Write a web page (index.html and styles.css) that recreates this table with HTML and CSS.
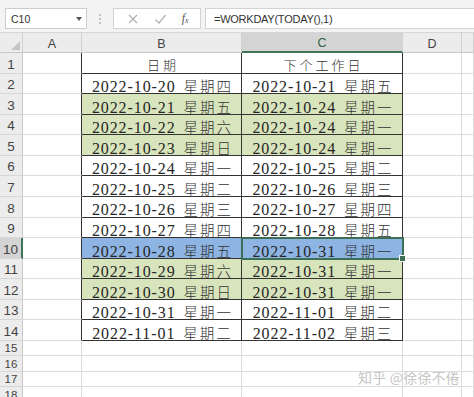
FILE: index.html
```html
<!DOCTYPE html>
<html lang="zh">
<head>
<meta charset="utf-8">
<title>WORKDAY</title>
<link rel="stylesheet" href="styles.css">
</head>
<body>
<div class="app">
  <div class="toolbar">
    <div class="namebox"><span>C10</span><svg class="caret" width="6" height="4" viewBox="0 0 6 4"><path d="M0 0H6L3 4Z" fill="#555"/></svg></div>
    <div class="dots"><i></i><i></i><i></i></div>
    <div class="fxbox">
      <svg width="12" height="12" viewBox="0 0 12 12"><path d="M2 2L10 10M10 2L2 10" stroke="#b0b0b0" stroke-width="1.2" fill="none"/></svg>
      <svg width="13" height="12" viewBox="0 0 13 12"><path d="M1.5 6.5L5 10L11.5 2" stroke="#b0b0b0" stroke-width="1.2" fill="none"/></svg>
      <span class="fx">f<sub>x</sub></span>
    </div>
    <div class="formula">=WORKDAY(TODAY(),1)</div>
  </div>

  <div class="sheet">
    <div class="corner"><svg width="9" height="9" viewBox="0 0 9 9"><path d="M9 0V9H0Z" fill="#c4c4c4"/></svg></div>
    <div class="ch">A</div><div class="ch">B</div><div class="ch selc">C</div><div class="ch">D</div><div class="ch"></div>

    <div class="rh">1</div><div class="c edge"></div><div class="c b hd">日期</div><div class="c b hd">下个工作日</div><div class="c"></div><div class="c"></div>
    <div class="rh">2</div><div class="c edge"></div><div class="c b"><span class="d">2022-10-20</span> <span class="w">星期四</span></div><div class="c b"><span class="d">2022-10-21</span> <span class="w">星期五</span></div><div class="c"></div><div class="c"></div>
    <div class="rh">3</div><div class="c edge"></div><div class="c b g"><span class="d">2022-10-21</span> <span class="w">星期五</span></div><div class="c b g"><span class="d">2022-10-24</span> <span class="w">星期一</span></div><div class="c"></div><div class="c"></div>
    <div class="rh">4</div><div class="c edge"></div><div class="c b g"><span class="d">2022-10-22</span> <span class="w">星期六</span></div><div class="c b g"><span class="d">2022-10-24</span> <span class="w">星期一</span></div><div class="c"></div><div class="c"></div>
    <div class="rh">5</div><div class="c edge"></div><div class="c b g"><span class="d">2022-10-23</span> <span class="w">星期日</span></div><div class="c b g"><span class="d">2022-10-24</span> <span class="w">星期一</span></div><div class="c"></div><div class="c"></div>
    <div class="rh">6</div><div class="c edge"></div><div class="c b"><span class="d">2022-10-24</span> <span class="w">星期一</span></div><div class="c b"><span class="d">2022-10-25</span> <span class="w">星期二</span></div><div class="c"></div><div class="c"></div>
    <div class="rh">7</div><div class="c edge"></div><div class="c b"><span class="d">2022-10-25</span> <span class="w">星期二</span></div><div class="c b"><span class="d">2022-10-26</span> <span class="w">星期三</span></div><div class="c"></div><div class="c"></div>
    <div class="rh">8</div><div class="c edge"></div><div class="c b"><span class="d">2022-10-26</span> <span class="w">星期三</span></div><div class="c b"><span class="d">2022-10-27</span> <span class="w">星期四</span></div><div class="c"></div><div class="c"></div>
    <div class="rh">9</div><div class="c edge"></div><div class="c b"><span class="d">2022-10-27</span> <span class="w">星期四</span></div><div class="c b"><span class="d">2022-10-28</span> <span class="w">星期五</span></div><div class="c"></div><div class="c"></div>
    <div class="rh selr">10</div><div class="c edge"></div><div class="c b bl"><span class="d">2022-10-28</span> <span class="w">星期五</span></div><div class="c b bl act"><span class="d">2022-10-31</span> <span class="w">星期一</span></div><div class="c"></div><div class="c"></div>
    <div class="rh">11</div><div class="c edge"></div><div class="c b g"><span class="d">2022-10-29</span> <span class="w">星期六</span></div><div class="c b g"><span class="d">2022-10-31</span> <span class="w">星期一</span></div><div class="c"></div><div class="c"></div>
    <div class="rh">12</div><div class="c edge"></div><div class="c b g"><span class="d">2022-10-30</span> <span class="w">星期日</span></div><div class="c b g"><span class="d">2022-10-31</span> <span class="w">星期一</span></div><div class="c"></div><div class="c"></div>
    <div class="rh">13</div><div class="c edge"></div><div class="c b"><span class="d">2022-10-31</span> <span class="w">星期一</span></div><div class="c b"><span class="d">2022-11-01</span> <span class="w">星期二</span></div><div class="c"></div><div class="c"></div>
    <div class="rh">14</div><div class="c edge"></div><div class="c b"><span class="d">2022-11-01</span> <span class="w">星期二</span></div><div class="c b"><span class="d">2022-11-02</span> <span class="w">星期三</span></div><div class="c"></div><div class="c"></div>
    <div class="rh sm">15</div><div class="c"></div><div class="c"></div><div class="c"></div><div class="c"></div><div class="c"></div>
    <div class="rh sm">16</div><div class="c"></div><div class="c"></div><div class="c"></div><div class="c"></div><div class="c"></div>
    <div class="rh sm">17</div><div class="c"></div><div class="c"></div><div class="c"></div><div class="c"></div><div class="c"></div>
    <div class="rh sm">18</div><div class="c"></div><div class="c"></div><div class="c"></div><div class="c"></div><div class="c"></div>
  </div>

  <div class="watermark">知乎 @徐徐不倦</div>
</div>
</body>
</html>
```

FILE: styles.css
```css
* { box-sizing: border-box; }
html, body { margin: 0; padding: 0; }
body {
  width: 474px;
  height: 397px;
  overflow: hidden;
  background: #ffffff;
  font-family: "Liberation Sans", "Noto Sans CJK SC", sans-serif;
  color: #333;
}
.app { position: relative; width: 474px; height: 397px; overflow: hidden; }

.toolbar {
  height: 33px;
  background: #f3f3f3;
  border-bottom: 1px solid #d6d6d6;
  display: flex;
  align-items: flex-start;
  padding-top: 8px;
}
.namebox {
  margin-left: 5px;
  width: 82px;
  height: 21px;
  background: #fff;
  border: 1px solid #cdcdcd;
  display: flex;
  align-items: center;
  justify-content: space-between;
  padding: 0 4px 0 5px;
  font-size: 10.5px;
  color: #333;
}
.caret { margin-top: 1px; }
.dots {
  width: 26px;
  height: 21px;
  display: flex;
  flex-direction: column;
  align-items: center;
  justify-content: center;
  gap: 2px;
}
.dots i { display: block; width: 2px; height: 2px; background: #c2c2c2; }
.fxbox {
  width: 88px;
  height: 21px;
  background: #fff;
  border: 1px solid #d3d3d3;
  display: flex;
  align-items: center;
  justify-content: space-around;
  padding: 0 4px 0 6px;
}
.fx {
  font-family: "Liberation Serif", serif;
  font-style: italic;
  font-size: 12px;
  color: #555;
}
.fx sub { font-size: 8px; vertical-align: -1px; }
.formula {
  margin-left: 4px;
  flex: 1;
  height: 21px;
  background: #fff;
  border: 1px solid #d3d3d3;
  border-right: none;
  padding-left: 8px;
  display: flex;
  align-items: center;
  font-size: 11px;
  letter-spacing: -0.25px;
  color: #333;
}

.sheet {
  display: grid;
  grid-template-columns: 23px 59px 160px 161px 59px 1fr;
  grid-template-rows: 20px repeat(14, 20.571px) repeat(4, 15.5px);
}
.corner {
  background: #ececec;
  border-right: 1px solid #d0d0d0;
  border-bottom: 1px solid #c8c8c8;
  display: flex;
  align-items: flex-end;
  justify-content: flex-end;
  padding: 0 2px 2px 0;
}
.ch {
  background: #ececec;
  border-right: 1px solid #d0d0d0;
  border-bottom: 1px solid #c8c8c8;
  display: flex;
  align-items: center;
  justify-content: center;
  font-size: 12.5px;
  color: #444;
  padding-top: 2px;
}
.ch.selc {
  background: #d4d4d4;
  border-bottom: 2px solid #3f7458;
  color: #2f5d45;
}
.rh {
  background: #ececec;
  border-right: 1px solid #c8c8c8;
  border-bottom: 1px solid #d6d6d6;
  display: flex;
  align-items: flex-end;
  justify-content: center;
  font-size: 13.5px;
  line-height: 16px;
  color: #444;
  padding-bottom: 0;
}
.rh.selr {
  background: #d4d4d4;
  border-right: 2px solid #3f7458;
  color: #444;
}
.rh.sm { font-size: 11.5px; line-height: 14px; }

.c {
  border-right: 1px solid #dcdcdc;
  border-bottom: 1px solid #dcdcdc;
  text-align: center;
  white-space: nowrap;
  overflow: visible;
  font-family: "Liberation Serif", "Noto Sans CJK SC", serif;
  font-size: 16px;
  line-height: 20px;
  padding-top: 2.5px;
  color: #262626;
}
.c.edge { border-right-color: #333; }
.c.b { border-right-color: #333; border-bottom-color: #333; }
.c.hd {
  font-family: "Noto Sans CJK SC", sans-serif;
  font-size: 13px;
  font-weight: 300;
  letter-spacing: 3px;
  padding-left: 3px;
  padding-top: 1.5px;
  color: #333;
}
.d { letter-spacing: 0.9px; margin-right: 4px; }
.w {
  font-family: "Noto Sans CJK SC", sans-serif;
  font-size: 14.5px;
  font-weight: 300;
  letter-spacing: 2px;
  margin-right: -2px;
  color: #333;
}
.c.g { background: #d8e4bc; }
.c.bl { background: #8db4e2; }
.c.act {
  position: relative;
  outline: 2px solid #3d6e56;
  outline-offset: -1px;
}
.c.act::after {
  content: "";
  position: absolute;
  right: -4px;
  bottom: -4px;
  width: 5px;
  height: 5px;
  background: #3d6e56;
  border: 1px solid #fff;
}

.watermark {
  position: absolute;
  left: 358px;
  top: 367px;
  font-family: "Noto Sans CJK SC", sans-serif;
  font-size: 14px;
  color: #c6c6c6;
  text-shadow: 0 0 1px #ffffff;
  letter-spacing: 0.2px;
}
```
